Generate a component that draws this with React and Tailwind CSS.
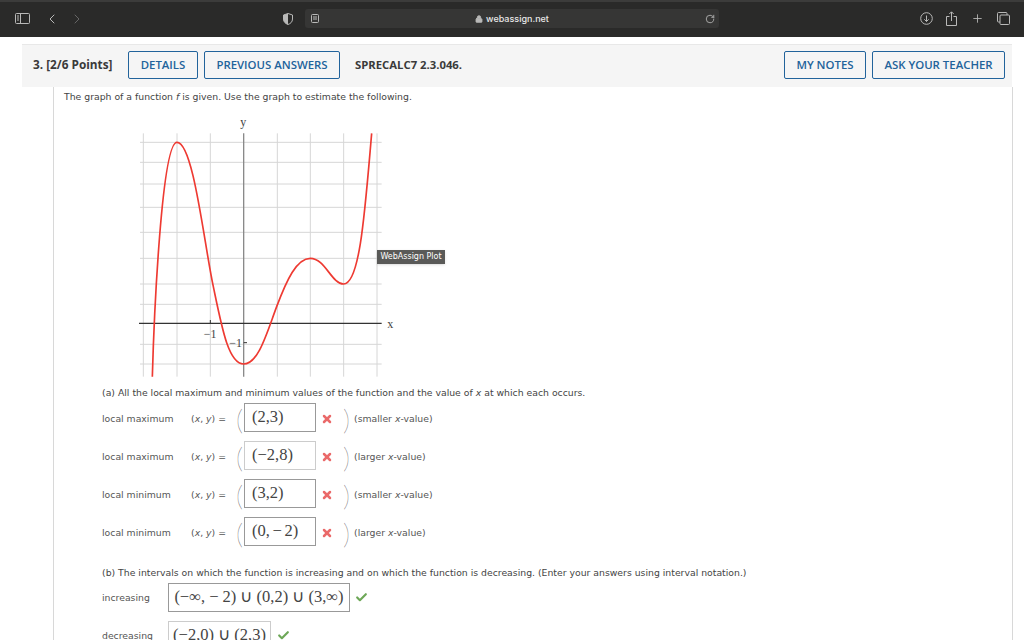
import React from 'react';
import { X, Check, ChevronLeft, ChevronRight, Lock, RotateCw, Plus } from 'lucide-react';

const body = "font-['DejaVu_Sans',sans-serif]";
const math = "font-['Liberation_Serif',serif] text-[#444]";

const rows = [
  { label: 'local maximum', value: '(2,3)', note: 'smaller', border: 'border-[#999]' },
  { label: 'local maximum', value: '(−2,8)', note: 'larger', border: 'border-[#ccc]' },
  { label: 'local minimum', value: '(3,2)', note: 'smaller', border: 'border-[#999]' },
  { label: 'local minimum', value: '(0, − 2)', note: 'larger', border: 'border-[#999]' },
];

const OutlineButton = ({ children, width }) => (
  <button className={`${width} h-[28px] shrink-0 rounded-[2px] border border-[#22639b] text-[11.400px] font-semibold text-[#22639b]`}>
    {children}
  </button>
);

const Toolbar = () => (
  <div className="flex h-[37px] items-center border-t-[2px] border-[#3c3c3b] bg-[#2a2a29] pb-[2px] text-[#b9b9b8]">
    <svg width="15" height="11" viewBox="0 0 15 11" fill="none" stroke="currentColor" className="ml-[15px]">
      <rect x="0.5" y="0.5" width="14" height="10" rx="1" />
      <path d="M5.5 0.5v10M2 3h2M2 5h2M2 7h2" />
    </svg>
    <ChevronLeft size={16} strokeWidth={1.5} className="ml-[14px]" />
    <ChevronRight size={16} strokeWidth={1.5} className="ml-[9px] text-[#666]" />
    <svg width="10" height="12" viewBox="0 0 10 12" className="ml-[198px]">
      <path d="M5 0.5 9.5 2v4c0 3-2 4.600-4.500 5.500C2.500 10.600 0.500 9 0.500 6V2z" fill="none" stroke="currentColor" />
      <path d="M5 0.5 0.500 2v4c0 3 2 4.600 4.500 5.500z" fill="currentColor" />
    </svg>
    <div className="relative ml-[12px] flex h-[19px] w-[414px] items-center justify-center rounded-[3px] bg-[#363635]">
      <svg width="8" height="9" viewBox="0 0 8 9" fill="none" stroke="currentColor" className="absolute left-[6px] top-[5px]">
        <rect x="0.5" y="0.5" width="7" height="8" rx="1" />
        <path d="M2 3h4M2 5h4" />
      </svg>
      <Lock size={8} strokeWidth={2.5} className="mr-[3px] fill-current" />
      <span className="font-['Inter',sans-serif] text-[9px] font-medium text-[#e8e8e8]">webassign.net</span>
      <RotateCw size={10} className="absolute right-[4px] top-[5px]" />
    </div>
    <svg width="13" height="13" viewBox="0 0 13 13" fill="none" stroke="currentColor" className="ml-[201px]">
      <circle cx="6.500" cy="6.500" r="5.800" />
      <path d="M6.500 3.500v6M4.300 7.300l2.200 2.200 2.200-2.200" />
    </svg>
    <svg width="11" height="15" viewBox="0 0 11 15" fill="none" stroke="currentColor" className="ml-[13px]">
      <path d="M3.500 5.500H.5v9h10v-9h-3M5.500 10V1M3.300 3l2.200-2.200L7.700 3" />
    </svg>
    <Plus size={13} strokeWidth={1.6} className="ml-[14px]" />
    <svg width="13" height="13" viewBox="0 0 13 13" fill="none" stroke="currentColor" className="ml-[13px]">
      <rect x="3" y="3" width="9.500" height="9.500" rx="1" />
      <path d="M3 10H1.500a1 1 0 0 1-1-1V1.500a1 1 0 0 1 1-1H9a1 1 0 0 1 1 1V3" />
    </svg>
  </div>
);

const QuestionHeader = () => (
  <div className="ml-[22px] mt-[7px] flex h-[43px] w-[990px] items-center border-t border-[#e8e8e8] bg-[#f5f5f5] pb-[2px] pl-[11px] pr-[7px] font-['Open_Sans',sans-serif]">
    <span className="w-[95px] shrink-0 text-[11.800px] font-bold text-[#3a3a3a]">3. [2/6 Points]</span>
    <OutlineButton width="w-[70px]">DETAILS</OutlineButton>
    <div className="w-[6px] shrink-0" />
    <OutlineButton width="w-[136px]">PREVIOUS ANSWERS</OutlineButton>
    <span className="ml-[15px] text-[11.300px] font-bold text-[#3a3a3a]">SPRECALC7 2.3.046.</span>
    <div className="flex-1" />
    <OutlineButton width="w-[82px]">MY NOTES</OutlineButton>
    <div className="w-[6px] shrink-0" />
    <OutlineButton width="w-[133px]">ASK YOUR TEACHER</OutlineButton>
  </div>
);

const Graph = () => {
  const vertical = [40, 141, 241, 442, 541, 641, 741];
  const horizontal = [97, 157, 222, 292, 367, 445, 522, 583, 703, 762];
  return (
    <div className="relative ml-[66px] mt-[3px] h-[270px] w-[320px]">
      <svg width="320" height="270" viewBox="0 0 960 810">
        {vertical.map((x) => (
          <line key={x} x1={x} x2={x} y1="70" y2="800" stroke="#d6d6d6" strokeWidth="3" />
        ))}
        {horizontal.map((y) => (
          <line key={y} x1="30" x2="755" y1={y} y2={y} stroke="#d6d6d6" strokeWidth="3" />
        ))}
        <line x1="341" x2="341" y1="70" y2="800" stroke="#8a8a8a" strokeWidth="4" />
        <line x1="27" x2="755" y1="640" y2="640" stroke="#333" strokeWidth="3.500" />
        <line x1="241" x2="241" y1="630" y2="640" stroke="#333" strokeWidth="3" />
        <line x1="341" x2="351" y1="698" y2="698" stroke="#333" strokeWidth="3" />
        <path
          d="M67 800C72 620 95 97 141 97C190 97 222 400 250 530C275 650 295 762 341 762C385 762 410 670 440 590C470 510 500 445 541 445C585 445 605 522 641 522C690 522 705 300 725 70"
          fill="none"
          stroke="#ee3a32"
          strokeWidth="5"
        />
        <g fontFamily="'Liberation Serif', serif" fontSize="36" fill="#444">
          <text x="331" y="48">y</text>
          <text x="772" y="654">x</text>
          <text x="221" y="684">−1</text>
          <text x="298" y="712">−1</text>
        </g>
      </svg>
      <div className={`absolute left-[247px] top-[140px] flex h-[14px] w-[68px] items-center justify-center bg-[#5a5a58] text-[8px] text-white shadow ${body}`}>
        WebAssign Plot
      </div>
    </div>
  );
};

const Paren = ({ children, className = '' }) => (
  <span className={`w-[8px] shrink-0 font-['Lato',sans-serif] text-[28px] font-thin leading-none text-[#444] ${className}`}>{children}</span>
);

const ExtremumRow = ({ label, value, note, border }) => (
  <div className={`flex h-[38px] items-center text-[9.300px] text-[#555] ${body}`}>
    <span className="w-[89px] shrink-0">{label}</span>
    <span className="w-[45px] shrink-0">(<i>x</i>, <i>y</i>) =</span>
    <Paren>(</Paren>
    <div className={`-mt-[3px] flex h-[29px] w-[72px] shrink-0 items-center border ${border} pl-[7px] text-[16.500px] [word-spacing:-1.500px] ${math}`}>{value}</div>
    <X size={12} strokeWidth={5} className="ml-[5px] shrink-0 text-[#ea6a6a]" />
    <div className="w-[10px] shrink-0" />
    <Paren>)</Paren>
    <span className="ml-[3px]">({note} <i>x</i>-value)</span>
  </div>
);

export default function App() {
  return (
    <div className="h-[640px] w-[1024px] overflow-hidden bg-white">
      <Toolbar />
      <QuestionHeader />
      <div className={`ml-[53px] h-[554px] w-[960px] border-x border-[#d8d8d8] pl-[10px] text-[9.300px] text-[#444] ${body}`}>
        <p className="flex h-[20px] items-center"><span>The graph of a function <i>f</i> is given. Use the graph to estimate the following.</span></p>
        <Graph />
        <div className="ml-[38px]">
          <p className="mt-[7px] h-[12px] leading-[12px]">(a) All the local maximum and minimum values of the function and the value of <i>x</i> at which each occurs.</p>
          <div className="mt-[1px]">
            {rows.map((row) => (
              <ExtremumRow key={row.value} {...row} />
            ))}
          </div>
          <p className="mt-[15px] h-[12px] leading-[12px]">(b) The intervals on which the function is increasing and on which the function is decreasing. (Enter your answers using interval notation.)</p>
          <div className="mt-[4px] flex h-[29px] items-center text-[#555]">
            <span className="w-[66px] shrink-0">increasing</span>
            <div className={`flex h-[29px] w-[182px] items-center justify-center border border-[#999] text-[16.500px] ${math}`}>(−∞, − 2) ∪ (0,2) ∪ (3,∞)</div>
            <Check size={13} strokeWidth={4} className="ml-[5px] text-[#6da757]" />
          </div>
          <div className="mt-[9px] flex h-[29px] items-center text-[#555]">
            <span className="w-[66px] shrink-0">decreasing</span>
            <div className={`flex h-[29px] w-[103px] items-center justify-center border border-[#ccc] text-[16.500px] ${math}`}>(−2,0) ∪ (2,3)</div>
            <Check size={13} strokeWidth={4} className="ml-[6px] text-[#6da757]" />
          </div>
        </div>
      </div>
    </div>
  );
}
